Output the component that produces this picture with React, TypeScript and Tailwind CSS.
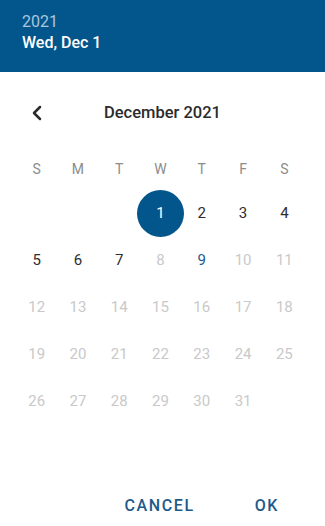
import { ChevronLeft } from "lucide-react";

const DAY_NAMES = ["S", "M", "T", "W", "T", "F", "S"];

// December 2021 starts on a Wednesday
const cells: (number | null)[] = [null, null, null, ...Array.from({ length: 31 }, (_, i) => i + 1)];

function DayCell({ day }: { day: number | null }) {
  if (day === null) return <div className="h-[47px]" />;

  let tone = "text-[#c9c9c9]";
  if (day <= 7) tone = "text-[#2e2e2e]";
  if (day === 9) tone = "text-[#1d5a8a]";

  if (day === 1) {
    return (
      <div className="h-[47px] flex items-center justify-center">
        <div className="w-[47px] h-[47px] shrink-0 rounded-full bg-[#03568c] flex items-center justify-center text-white text-[15px]">
          1
        </div>
      </div>
    );
  }

  return (
    <div className={`h-[47px] flex items-center justify-center text-[15px] ${tone}`}>
      {day}
    </div>
  );
}

export default function App() {
  return (
    <div className="w-[325px] h-[526px] bg-white flex flex-col font-['Roboto',sans-serif]">
      <div className="h-[72px] bg-[#03568c] px-[22px] pt-[12px] flex flex-col">
        <div className="text-[16px] leading-[20px] text-[#a9c6dd]">2021</div>
        <div className="text-[16px] leading-[22px] font-medium text-white">Wed, Dec 1</div>
      </div>

      <div className="mt-[17px] h-12 relative flex items-center justify-center">
        <button className="absolute left-[25px] top-1/2 -translate-y-1/2 text-[#2b2b2b]">
          <ChevronLeft size={24} strokeWidth={2.5} />
        </button>
        <span className="text-[16.5px] font-medium text-[#2b2b2b]">December 2021</span>
      </div>

      <div className="mt-[12px] pl-[16px] pr-[20px]">
        <div className="grid grid-cols-7 h-10 items-center">
          {DAY_NAMES.map((d, i) => (
            <div key={i} className="text-center text-[14px] text-[#8c8c8c]">
              {d}
            </div>
          ))}
        </div>
        <div className="mt-[1px] grid grid-cols-7">
          {cells.map((d, i) => (
            <DayCell key={i} day={d} />
          ))}
        </div>
      </div>

      <div className="mt-auto h-[40px] flex items-center justify-end gap-[60px] pr-[46px]">
        <button className="text-[16px] font-medium tracking-[0.1em] text-[#1d5a8a]">CANCEL</button>
        <button className="text-[16px] font-medium tracking-[0.1em] text-[#1d5a8a]">OK</button>
      </div>
    </div>
  );
}
